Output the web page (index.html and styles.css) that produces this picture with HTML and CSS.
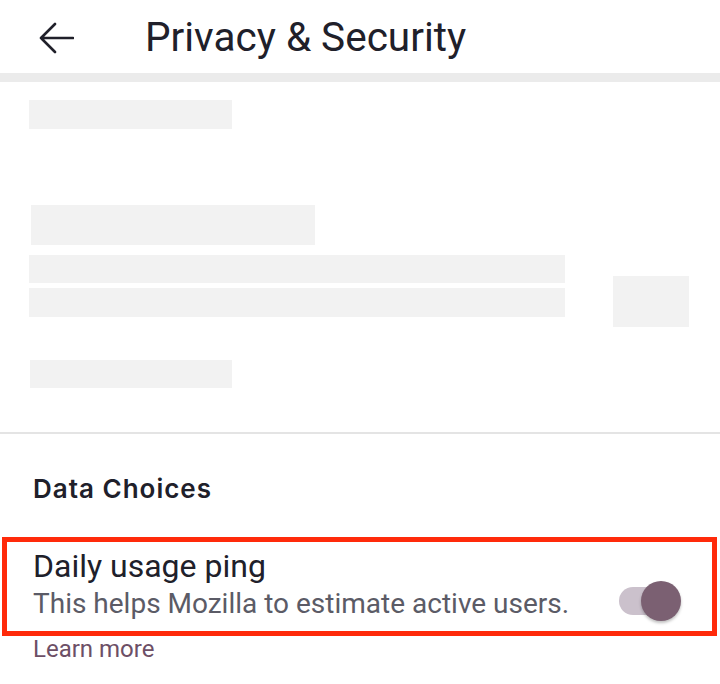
FILE: index.html
```html
<!DOCTYPE html>
<html>
<head>
<meta charset="utf-8">
<link rel="stylesheet" href="styles.css">
</head>
<body>
<header class="toolbar">
  <svg class="back" width="36" height="32" viewBox="0 0 36 32">
    <path d="M35 16H3M17 2L3 16l14 14" fill="none" stroke="#20202a" stroke-width="2.6" stroke-linecap="round" stroke-linejoin="round"/>
  </svg>
  <h1 class="title">Privacy &amp; Security</h1>
</header>
<div class="band"></div>
<section class="placeholders">
  <div class="ph ph1"></div>
  <div class="group">
    <div class="lines">
      <div class="ph ph2"></div>
      <div class="ph ph3"></div>
      <div class="ph ph4"></div>
    </div>
    <div class="ph ph5"></div>
  </div>
  <div class="ph ph6"></div>
</section>
<div class="divider"></div>
<section class="data">
  <h2 class="heading">Data Choices</h2>
  <div class="row">
    <div class="text">
      <div class="row-title">Daily usage ping</div>
      <div class="row-sub">This helps Mozilla to estimate active users.</div>
    </div>
    <div class="toggle"><span class="track"></span><span class="thumb"></span></div>
  </div>
  <a class="learn">Learn more</a>
</section>
</body>
</html>
```
FILE: styles.css
```css
html, body { margin: 0; padding: 0; background: #fff; }
body { width: 720px; height: 684px; overflow: hidden; font-family: Roboto, "Noto Sans", sans-serif; }
.toolbar { height: 73px; display: flex; align-items: center; box-sizing: border-box; padding: 0 0 0 38px; }
.back { display: block; margin-top: 2px; }
.title { margin: 2px 0 0 71px; font-family: Roboto, sans-serif; font-weight: 400; font-size: 40.5px; color: #20202a; letter-spacing: 0; line-height: 1; }
.band { height: 9px; background: #ebebeb; }
.placeholders { padding: 18px 0 0 29px; height: 332px; box-sizing: border-box; }
.ph { background: #f2f2f2; }
.ph1 { width: 203px; height: 29px; }
.group { display: flex; align-items: flex-start; margin-top: 76px; }
.lines { width: 536px; }
.ph2 { width: 284px; height: 40px; margin-left: 2px; }
.ph3 { width: 536px; height: 28px; margin-top: 10px; }
.ph4 { width: 536px; height: 29px; margin-top: 5px; }
.ph5 { width: 76px; height: 51px; margin: 71px 0 0 48px; }
.ph6 { width: 202px; height: 28px; margin: 33px 0 0 1px; }
.divider { height: 2px; background: #e4e4e4; margin-top: 18px; }
.data { padding: 0; }
.heading { margin: 0; padding: 40px 0 0 33px; font-family: Inter, sans-serif; font-weight: 600; font-size: 26px; letter-spacing: 1px; color: #20202a; line-height: 30px; }
.row { margin: 33px 3px 0 2px; border: 5px solid #ff2a0a; height: 89px; display: flex; align-items: center; box-sizing: content-box; }
.text { flex: 1; padding-left: 26px; }
.row-title { font-size: 32px; color: #20202a; line-height: 36px; margin-top: -6px; }
.row-sub { font-size: 28px; color: #5b5b66; line-height: 32px; margin-top: 4px; }
.toggle { position: relative; width: 70px; height: 42px; margin: 28px 27px 0 0; }
.track { position: absolute; left: 4px; top: 7px; width: 50px; height: 28px; border-radius: 14px; background: #cbc1cc; }
.thumb { position: absolute; left: 26px; top: 1px; width: 40px; height: 40px; border-radius: 50%; background: #7b6072; box-shadow: 0 2px 3px rgba(0,0,0,0.25); }
.learn { display: block; padding: 0 0 0 33px; margin-top: -2px; font-size: 24px; color: #6d4f66; line-height: 30px; }
```
